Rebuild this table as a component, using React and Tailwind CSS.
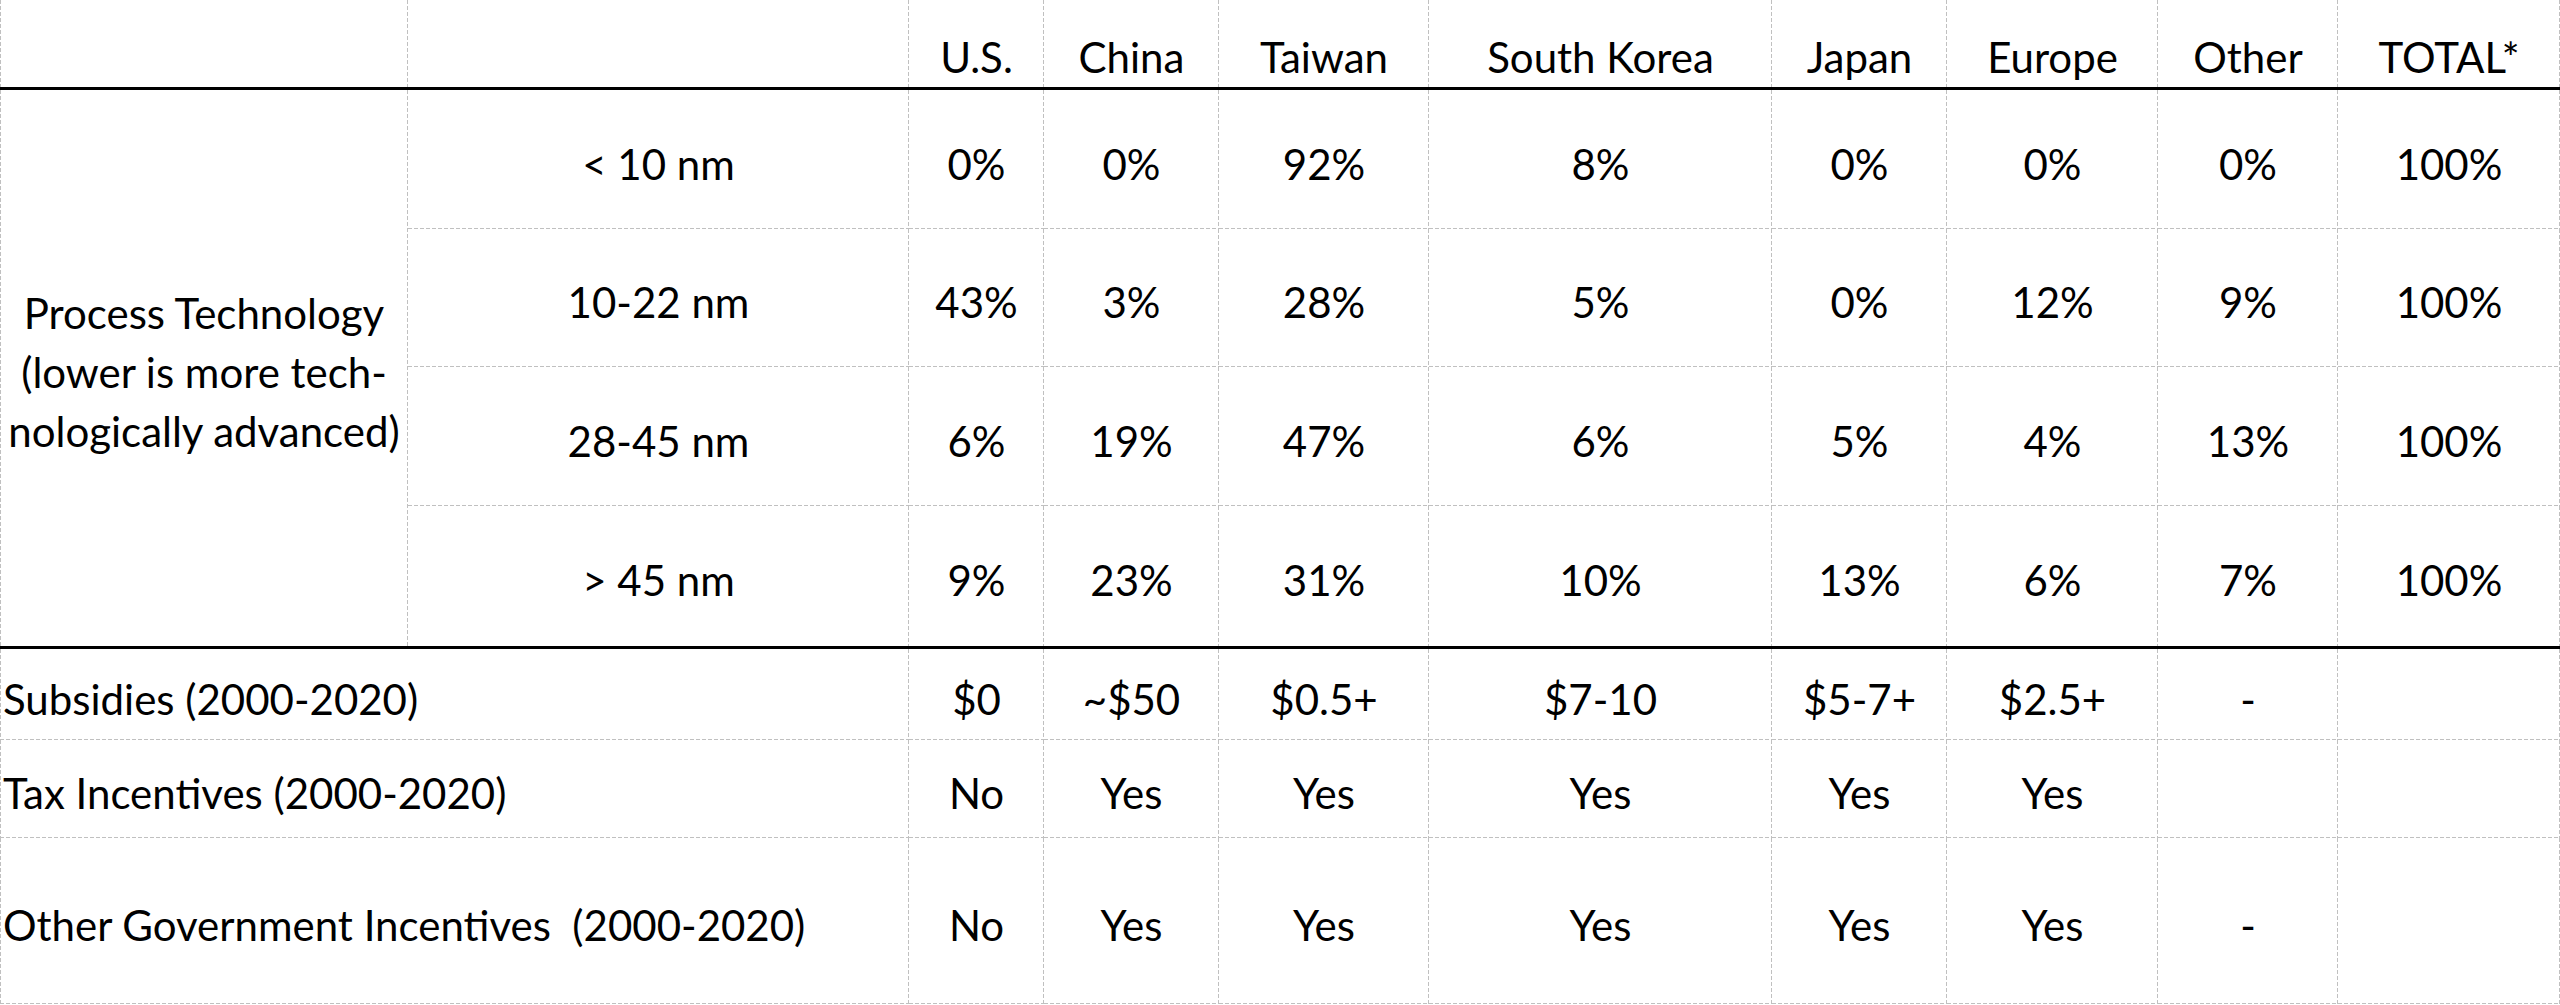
const countries = ["U.S.", "China", "Taiwan", "South Korea", "Japan", "Europe", "Other", "TOTAL*"];

const processRows = [
  ["< 10 nm", "0%", "0%", "92%", "8%", "0%", "0%", "0%", "100%"],
  ["10-22 nm", "43%", "3%", "28%", "5%", "0%", "12%", "9%", "100%"],
  ["28-45 nm", "6%", "19%", "47%", "6%", "5%", "4%", "13%", "100%"],
  ["> 45 nm", "9%", "23%", "31%", "10%", "13%", "6%", "7%", "100%"],
];

const policyRows = [
  ["Subsidies (2000-2020)", "$0", "~$50", "$0.5+", "$7-10", "$5-7+", "$2.5+", "-", ""],
  ["Tax Incentives (2000-2020)", "No", "Yes", "Yes", "Yes", "Yes", "Yes", "", ""],
  ["Other Government Incentives  (2000-2020)", "No", "Yes", "Yes", "Yes", "Yes", "Yes", "-", ""],
];

// excel-ish dashed gridlines (4px dash / 2px gap)
const gridR =
  "bg-no-repeat [background-image:repeating-linear-gradient(to_bottom,#c0c0c0_0_4px,transparent_4px_6px)] [background-size:1px_100%] [background-position:right_top]";
const gridRB =
  "bg-no-repeat [background-image:repeating-linear-gradient(to_bottom,#c0c0c0_0_4px,transparent_4px_6px),repeating-linear-gradient(to_right,#c0c0c0_0_4px,transparent_4px_6px)] [background-size:1px_100%,100%_1px] [background-position:right_top,left_bottom]";
const gridLR =
  "bg-no-repeat [background-image:repeating-linear-gradient(to_bottom,#c0c0c0_0_4px,transparent_4px_6px),repeating-linear-gradient(to_bottom,#c0c0c0_0_4px,transparent_4px_6px)] [background-size:1px_100%,1px_100%] [background-position:right_top,left_top]";
const gridLRB =
  "bg-no-repeat [background-image:repeating-linear-gradient(to_bottom,#c0c0c0_0_4px,transparent_4px_6px),repeating-linear-gradient(to_bottom,#c0c0c0_0_4px,transparent_4px_6px),repeating-linear-gradient(to_right,#c0c0c0_0_4px,transparent_4px_6px)] [background-size:1px_100%,1px_100%,100%_1px] [background-position:right_top,left_top,left_bottom]";

function Cell({ children, className = "" }) {
  return (
    <div className={`flex items-center justify-center whitespace-nowrap pt-[8px] leading-none ${className}`}>
      {children}
    </div>
  );
}

export default function App() {
  return (
    <div className="w-[2560px] h-[1005px] overflow-hidden bg-white text-black text-[42px] [font-family:Lato,'Open_Sans',sans-serif]">
      <div className="grid grid-cols-[408px_501px_135px_175px_210px_343px_175px_211px_180px_222px] grid-rows-[87px_3px_139px_138px_139px_140px_3px_91px_98px_166px]">
        {/* header */}
        <div className={gridLR} />
        <div className={gridR} />
        {countries.map((c) => (
          <div key={c} className={`flex items-end justify-center whitespace-nowrap pb-[9px] leading-none ${gridR}`}>
            {c}
          </div>
        ))}

        <div className="col-span-10 bg-black" />

        {/* process technology block */}
        <div className={`row-span-4 flex items-center justify-center pt-[8px] text-center leading-[59px] ${gridLR}`}>
          <div className="whitespace-nowrap">
            Process Technology
            <br />
            (lower is more tech-
            <br />
            nologically advanced)
          </div>
        </div>
        {processRows.map((row, ri) =>
          row.map((v, ci) => (
            <Cell key={`${ri}-${ci}`} className={ri < 3 ? gridRB : gridR}>
              {v}
            </Cell>
          ))
        )}

        <div className="col-span-10 bg-black" />

        {/* policy rows */}
        {policyRows.map((row, ri) => (
          <div key={ri} className="contents">
            <div className={`col-span-2 flex items-center justify-start pl-[3px] pt-[8px] whitespace-pre leading-none ${gridLRB}`}>
              {row[0]}
            </div>
            {row.slice(1).map((v, ci) => (
              <Cell key={ci} className={gridRB}>
                {v}
              </Cell>
            ))}
          </div>
        ))}
      </div>
    </div>
  );
}
